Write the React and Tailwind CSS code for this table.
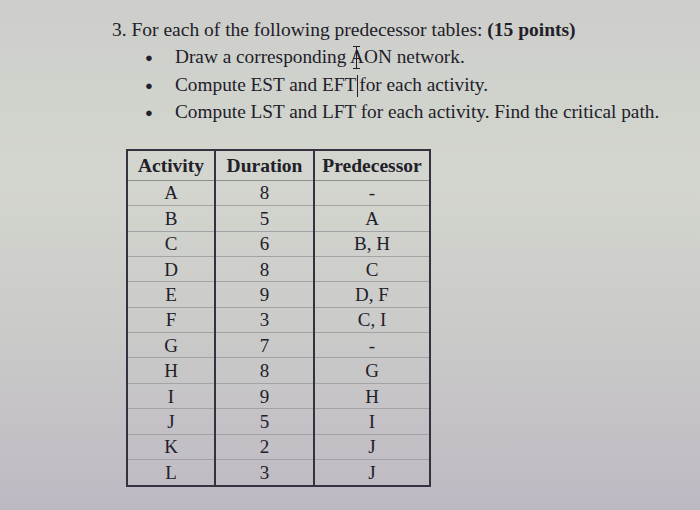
const rows = [
  ["A", "8", "-"],
  ["B", "5", "A"],
  ["C", "6", "B, H"],
  ["D", "8", "C"],
  ["E", "9", "D, F"],
  ["F", "3", "C, I"],
  ["G", "7", "-"],
  ["H", "8", "G"],
  ["I", "9", "H"],
  ["J", "5", "I"],
  ["K", "2", "J"],
  ["L", "3", "J"],
];

function Bullet({ children }) {
  return (
    <li className="flex items-center h-[27.5px]">
      <span className="w-[30px] text-[13px] leading-none">●</span>
      <span>{children}</span>
    </li>
  );
}

export default function App() {
  return (
    <div className="w-[700px] h-[510px] overflow-hidden bg-[linear-gradient(180deg,#cdcecb_0%,#d3d6ce_35%,#c9c8c8_70%,#bdb9c3_100%)] text-[#222029] font-['Liberation_Serif',serif]">
      <div className="pl-[112px] pt-[17px]">
        <p className="text-[19.5px] leading-[25px]">
          3. For each of the following predecessor tables: <b>(15 points)</b>
        </p>
        <ul className="mt-[2px] pl-[33px] text-[19.3px]">
          <Bullet>
            Draw a corresponding{" "}
            <span className="relative">
              A
              <span className="absolute left-[6px] top-[0px] h-[23px] w-[1px] bg-[#222029]" />
              <span className="absolute left-[3px] top-[0px] h-[1px] w-[7px] bg-[#222029]" />
              <span className="absolute left-[3px] top-[22px] h-[1px] w-[7px] bg-[#222029]" />
            </span>
            ON network.
          </Bullet>
          <Bullet>
            Compute EST and EFT
            <span className="inline-block w-[1px] h-[22px] bg-[#222029] align-middle mx-[1px]" />
            for each activity.
          </Bullet>
          <Bullet>Compute LST and LFT for each activity. Find the critical path.</Bullet>
        </ul>
      </div>

      <div className="ml-[126px] mt-[22px] w-[305px] border-2 border-[#36303f]">
        <table className="w-full border-collapse text-[19px] text-center">
          <thead>
            <tr className="h-[25px] text-[19.5px]">
              <th className="w-[87px] border-r-2 border-r-[#36303f] border-b border-b-[#8e8d90] font-bold">Activity</th>
              <th className="w-[99px] border-r-2 border-r-[#36303f] border-b border-b-[#8e8d90] font-bold">Duration</th>
              <th className="border-b border-b-[#8e8d90] font-bold">Predecessor</th>
            </tr>
          </thead>
          <tbody>
            {rows.map((r, i) => (
              <tr key={r[0]} className="h-[25.4px]">
                {r.map((c, j) => (
                  <td
                    key={j}
                    className={`leading-none ${j < 2 ? "border-r-2 border-r-[#36303f]" : ""} ${i < rows.length - 1 ? "border-b border-b-[#a3a3a6]" : ""}`}
                  >
                    {c}
                  </td>
                ))}
              </tr>
            ))}
          </tbody>
        </table>
      </div>
    </div>
  );
}
